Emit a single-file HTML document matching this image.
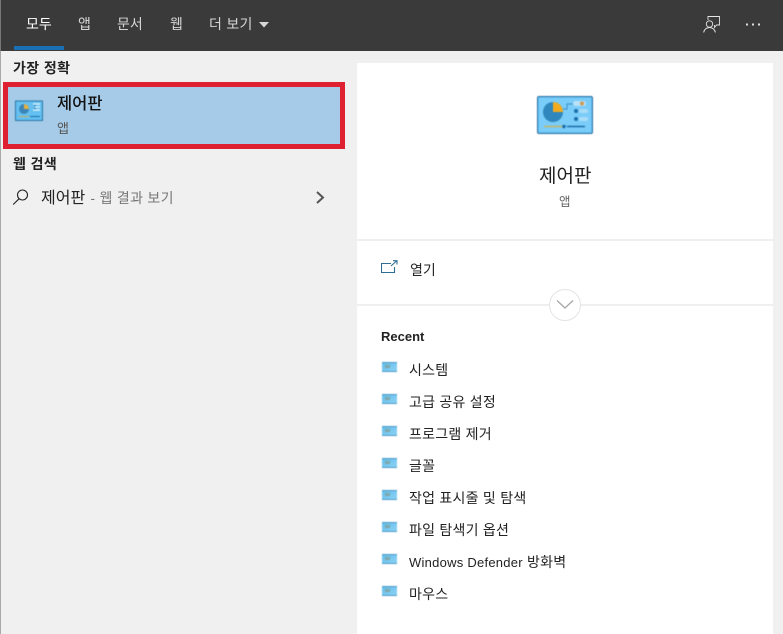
<!DOCTYPE html>
<html lang="ko"><head><meta charset="utf-8"><title>제어판</title>
<style>
html,body{margin:0;padding:0}
body{width:783px;height:634px;overflow:hidden;position:relative;background:#f0f0f0;font-family:"Liberation Sans","Noto Sans CJK KR",sans-serif;color:#1a1a1a}
.t{position:absolute;white-space:nowrap;line-height:20px}
.bar{position:absolute;left:0;top:0;width:783px;height:51px;background:#3a3a3a}
.tab{color:#d6d6d6;font-size:14px;top:14px}
.r{position:absolute;left:357px;top:63px;width:416px;height:571px;background:#fff}
.rec{font-size:14px;left:409px;color:#222;letter-spacing:.25px}
.h{font-size:14px;font-weight:700;color:#222;left:13px;letter-spacing:.4px}
svg{position:absolute}
.ic{filter:blur(.4px)}
</style></head><body>
<svg width="0" height="0" style="position:absolute"><defs>
<linearGradient id="g" x1="0" y1="0" x2="1" y2="1"><stop offset="0" stop-color="#5fbdec"/><stop offset="1" stop-color="#8fd2f5"/></linearGradient>
<symbol id="m" viewBox="0 0 15 10"><rect width="15" height="10" fill="url(#g)"/><rect width="15" height="1" fill="#4f9ac6"/><rect x="3" y="3" width="5" height="3" fill="#7fa8a8"/><rect y="9" width="15" height="1" fill="#4f9ac6"/></symbol>
</defs></svg>
<div class="bar"></div>
<div style="position:absolute;left:0;top:51px;width:1px;height:583px;background:#a8a8a8"></div>
<div style="position:absolute;left:0;top:0;width:1px;height:51px;background:#777"></div>
<div style="position:absolute;left:14px;top:46px;width:50px;height:4px;background:#1a6fb5"></div>
<div class="t tab" style="left:26px;color:#fff">모두</div>
<div class="t tab" style="left:78px">앱</div>
<div class="t tab" style="left:117px">문서</div>
<div class="t tab" style="left:170px">웹</div>
<div class="t tab" style="left:209px;letter-spacing:.3px">더 보기</div>
<svg style="left:259px;top:22px" width="11" height="6"><path d="M0 0H10L5 5.500Z" fill="#d8d8d8"/></svg>
<svg style="left:703px;top:15px" width="17" height="18" fill="none" stroke="#e4e4e4" stroke-width=".9"><path d="M5 5V1.500H16.500V10H13.500L11.500 12.500V10"/><circle cx="6.500" cy="9" r="3.200"/><path d="M.7 17.500C1 14.500 3.500 12.500 6.500 12.500S12 14.500 12.300 17.500"/></svg>
<svg style="left:746px;top:23px" width="15" height="3" fill="#dcdcdc"><rect x="0" y=".5" width="2" height="2"/><rect x="6" y=".5" width="2" height="2"/><rect x="12" y=".5" width="2" height="2"/></svg>

<div class="t h" style="top:58px">가장 정확</div>
<div style="position:absolute;left:3px;top:82px;width:332px;height:57px;border:5px solid #de2030;background:#a6cbe8"></div>
<svg class="ic" style="left:15px;top:100px" width="29" height="22" viewBox="0 0 29 22"><rect x=".5" y="1" width="27" height="19.500" fill="#64c0f0" stroke="#2a78a8"/><circle cx="9" cy="9" r="5" fill="#3a86b8"/><path d="M9 4a5 5 0 0 1 5 5H9Z" fill="#e8b040"/><path d="M18 4H25M20 7H25M18 10H25" stroke="#d8f0fc" stroke-width="1.400"/><path d="M19 5.500H21M19 8.500H21" stroke="#1a6ea8"/><path d="M4 16.500H14" stroke="#c8b060"/><path d="M15 16.500H25" stroke="#1a6ea8"/></svg>
<div class="t" style="left:57px;top:94px;font-size:16.500px;font-weight:500;color:#111">제어판</div>
<div class="t" style="left:57px;top:119px;font-size:13px;color:#555">앱</div>

<div class="t h" style="top:154px">웹 검색</div>
<svg style="left:12px;top:188px" width="18" height="18" fill="none" stroke="#222" stroke-width="1.100"><circle cx="10.500" cy="7" r="5"/><path d="M7 10.800L1.200 16.500"/></svg>
<div class="t" style="left:41px;top:188px;font-size:16px;color:#222">제어판<span style="font-size:14px;color:#777;letter-spacing:.3px;margin-left:1px"> - 웹 결과 보기</span></div>
<svg style="left:315px;top:190px" width="11" height="15" fill="none" stroke="#555" stroke-width="2"><path d="M2 2L8 7.500L2 13"/></svg>

<div class="r"></div>
<svg class="ic" style="left:536px;top:95px" width="58" height="41" viewBox="0 0 58 41"><rect x="1.500" y="1.500" width="55" height="37" rx="1.500" fill="#62c1f5" stroke="#2a6f9e"/><rect x="3" y="3" width="52" height="34" fill="#7accf9"/><circle cx="17" cy="17" r="10" fill="#2f87bd"/><path d="M17 7a10 10 0 0 1 10 10H17Z" fill="#f3ab1d"/><path d="M27 14H31V9H37" fill="none" stroke="#3a8fc2"/><rect x="37" y="6" width="13" height="5" rx="2.500" fill="#b9e2f8"/><circle cx="46" cy="8.500" r="2" fill="#d09a4e"/><circle cx="40" cy="16" r="2" fill="#1b6fa8"/><rect x="43" y="14" width="9" height="4" rx="2" fill="#a9dcf7"/><circle cx="40" cy="24" r="2" fill="#1b6fa8"/><rect x="43" y="22" width="9" height="4" rx="2" fill="#a9dcf7"/><path d="M8 31.500H28" stroke="#c4b465" stroke-width="1.500"/><circle cx="28" cy="31.500" r="1.800" fill="#1b6fa8"/><path d="M31 31.500H49" stroke="#1a6fa8" stroke-width="1.500"/></svg>
<div class="t" style="left:539px;top:167px;font-size:19px;color:#222">제어판</div>
<div class="t" style="left:559px;top:192px;font-size:12.500px;color:#666">앱</div>
<div style="position:absolute;left:357px;top:239px;width:416px;height:2px;background:#efefef"></div>
<svg style="left:381px;top:260px" width="17" height="13" fill="none" stroke="#2f6f94" stroke-width="1.100"><path d="M10 3.500H.5V12.500H13.500V7"/><path d="M10 6L15.500 1M12 .7H16V4.500"/></svg>
<div class="t" style="left:410px;top:260px;font-size:14px;color:#222">열기</div>
<div style="position:absolute;left:357px;top:304px;width:416px;height:2px;background:#efefef"></div>
<div style="position:absolute;left:549px;top:289px;width:30px;height:30px;border:1px solid #e4e4e4;border-radius:50%;background:#fff"></div>
<svg style="left:556px;top:299px" width="18" height="11" fill="none" stroke="#a5a5a5" stroke-width="1.200"><path d="M1 1.500L9 9L17 1.500"/></svg>
<div class="t" style="left:381px;top:327px;font-size:13px;font-weight:700;color:#222">Recent</div>

<div class="t rec" style="top:360px">시스템</div>
<div class="t rec" style="top:392px">고급 공유 설정</div>
<div class="t rec" style="top:424px">프로그램 제거</div>
<div class="t rec" style="top:456px">글꼴</div>
<div class="t rec" style="top:488px">작업 표시줄 및 탐색</div>
<div class="t rec" style="top:520px">파일 탐색기 옵션</div>
<div class="t rec" style="top:552px"><span style="font-size:13px;letter-spacing:.25px">Windows Defender</span> 방화벽</div>
<div class="t rec" style="top:584px">마우스</div>

<svg class="ic" style="left:382px;top:362px" width="15" height="10"><use href="#m"/></svg>
<svg class="ic" style="left:382px;top:394px" width="15" height="10"><use href="#m"/></svg>
<svg class="ic" style="left:382px;top:426px" width="15" height="10"><use href="#m"/></svg>
<svg class="ic" style="left:382px;top:458px" width="15" height="10"><use href="#m"/></svg>
<svg class="ic" style="left:382px;top:490px" width="15" height="10"><use href="#m"/></svg>
<svg class="ic" style="left:382px;top:522px" width="15" height="10"><use href="#m"/></svg>
<svg class="ic" style="left:382px;top:554px" width="15" height="10"><use href="#m"/></svg>
<svg class="ic" style="left:382px;top:586px" width="15" height="10"><use href="#m"/></svg>
</body></html>
